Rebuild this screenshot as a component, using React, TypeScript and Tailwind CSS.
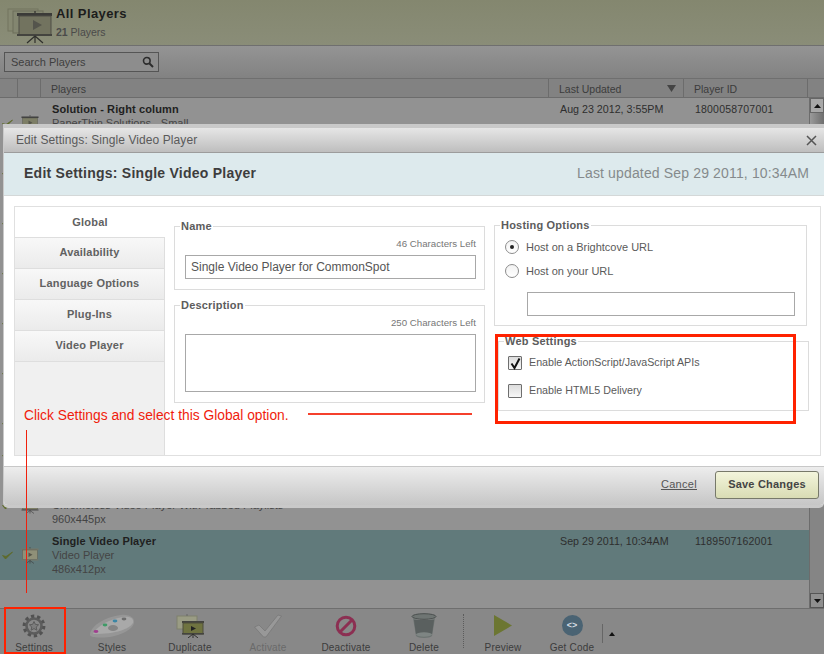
import type { ReactNode } from "react";

const FONT = "[font-family:'Liberation_Sans',Arial,sans-serif]";

function Check({ className = "" }: { className?: string }) {
  return (
    <svg width="11" height="9" viewBox="0 0 11 9" className={className}>
      <path d="M0.5 4.5 L3.5 8 L10.5 1 L4 5.5 Z" fill="#5e6b2a" stroke="#5e6b2a" strokeWidth="0.8" />
    </svg>
  );
}

function Screen({ size = 18, light = false }: { size?: number; light?: boolean }) {
  return (
    <svg width={size} height={size} viewBox="0 0 36 36">
      <rect x="1" y="5" width="34" height="3" fill={light ? "#77786a" : "#3d3d3d"} />
      <rect x="3" y="8" width="30" height="19" fill={light ? "#8f9078" : "#7d7e66"} stroke="#5a5a50" />
      <path d="M15 13 L23 17.5 L15 22 Z" fill="#55554a" />
      <rect x="1" y="27" width="34" height="2" fill={light ? "#77786a" : "#4a4a4a"} />
      <path d="M18 2 V5 M18 29 L10 35 M18 29 L26 35 M18 29 V35" stroke="#3a3a3a" strokeWidth="1.2" fill="none" />
    </svg>
  );
}

function BigPlayers() {
  return (
    <svg width="46" height="41" viewBox="0 0 46 41" className="shrink-0">
      <rect x="2" y="5" width="30" height="22" fill="#868972" stroke="#72745f" />
      <rect x="7" y="7" width="30" height="22" fill="#838670" stroke="#6c6e5a" />
      <rect x="11" y="9" width="36" height="3" fill="#3b3b38" />
      <rect x="13" y="12" width="32" height="19" fill="#72735f" stroke="#4e4e46" />
      <path d="M27 16 L36 21 L27 26 Z" fill="#54544c" />
      <rect x="11" y="30" width="36" height="2" fill="#44443f" />
      <path d="M29 32 L21 39 M29 32 L37 39 M29 32 V39 M29 7 V9" stroke="#2f2f2c" strokeWidth="1.2" />
    </svg>
  );
}

function GearIcon() {
  return (
    <svg width="24" height="24" viewBox="0 0 24 24">
      <circle cx="12" cy="12" r="9.6" fill="none" stroke="#525252" strokeWidth="3.6" strokeDasharray="3.2 2.8" />
      <circle cx="12" cy="12" r="7.5" fill="none" stroke="#5c5c5c" strokeWidth="2.6" />
      <path d="M12 7.5 L13.4 10.4 L16.6 10.8 L14.2 13 L14.9 16.2 L12 14.6 L9.1 16.2 L9.8 13 L7.4 10.8 L10.6 10.4 Z" fill="#7d7d7d" stroke="#5c5c5c" />
    </svg>
  );
}

function PaletteIcon() {
  return (
    <svg width="46" height="24" viewBox="0 0 46 24">
      <path d="M1 20 C3 11 16 3 32 1 C41 0 46 4 45 9 C44 15 33 21 21 23 C10 24 0 24 1 20 Z" fill="#969696" />
      <path d="M4 20 C8 12 20 5 34 3 C42 2 45 5 44 9 C40 15 28 20 4 20 Z" fill="#a9a9a9" />
      <ellipse cx="24" cy="14" rx="5" ry="3" fill="#858585" />
      <ellipse cx="7" cy="17.5" rx="2.4" ry="1.4" fill="#a03f8f" />
      <ellipse cx="16" cy="11" rx="2.4" ry="1.4" fill="#3f9a67" />
      <ellipse cx="26" cy="7" rx="2.4" ry="1.4" fill="#3b86a5" />
      <ellipse cx="35" cy="5" rx="2.4" ry="1.4" fill="#6d6d6d" />
    </svg>
  );
}

function DuplicateIcon() {
  return (
    <svg width="28" height="24" viewBox="0 0 28 24">
      <rect x="1" y="2" width="20" height="13" fill="#9a9c84" stroke="#7e806c" />
      <path d="M11 0 V2" stroke="#666" />
      <rect x="6" y="7" width="22" height="2" fill="#44443f" />
      <rect x="7" y="9" width="20" height="11" fill="#6f7340" stroke="#4e4e3c" />
      <path d="M15 12 L20 14.5 L15 17 Z" fill="#222" />
      <rect x="6" y="19" width="22" height="1.5" fill="#44443f" />
      <path d="M17 20 L12 24 M17 20 L22 24 M17 20 V24" stroke="#2f2f2c" />
    </svg>
  );
}

function ActivateIcon() {
  return (
    <svg width="28" height="24" viewBox="0 0 28 24">
      <path d="M0.5 13 L5 11 L11 17 L24 1 L27.5 2 L12 23 L9.5 23 Z" fill="#989898" stroke="#767676" strokeWidth="0.7" />
    </svg>
  );
}

function DeactivateIcon() {
  return (
    <svg width="22" height="22" viewBox="0 0 22 22">
      <circle cx="11" cy="11" r="8.8" fill="none" stroke="#8c2f52" strokeWidth="3" />
      <path d="M5 17 L17 5" stroke="#8c2f52" strokeWidth="3" />
    </svg>
  );
}

function TrashIcon() {
  return (
    <svg width="26" height="26" viewBox="0 0 26 26">
      <ellipse cx="13" cy="3.5" rx="12" ry="2.8" fill="#6f7573" stroke="#4a4f4e" />
      <path d="M2 5 L5 23 C7 25.5 19 25.5 21 23 L24 5 C20 8 6 8 2 5 Z" fill="#6c7371" />
      <path d="M3 7 L5 21 C9 19.5 17 19.5 21 21 L23 7" fill="#5a605f" />
      <ellipse cx="13" cy="21.5" rx="8" ry="2.2" fill="#7e8583" />
    </svg>
  );
}

function PreviewIcon() {
  return (
    <svg width="18" height="21" viewBox="0 0 18 21">
      <path d="M0 0 L18 10.5 L0 21 Z" fill="#6c7632" />
    </svg>
  );
}

function GetCodeIcon() {
  return (
    <div className="w-[21px] h-[21px] rounded-full bg-[#4a6373] flex items-center justify-center text-[9px] font-bold text-[#d5dde2]">
      {"<>"}
    </div>
  );
}

function ToolItem({ icon, label, width = "w-[78px]", dim = false }: { icon: ReactNode; label: string; width?: string; dim?: boolean }) {
  return (
    <div className={`${width} shrink-0 flex flex-col items-center`}>
      <div className="h-[27px] flex items-center justify-center">{icon}</div>
      <span className={`text-[10px] mt-[3px] tracking-[0.2px] leading-[12px] ${dim ? "text-[#6a6a6a]" : "text-[#3c3c3c]"}`}>{label}</span>
    </div>
  );
}

function PlayerRow({ name, type, size, date, id, selected = false }: { name: string; type: string; size: string; date: string; id: string; selected?: boolean }) {
  return (
    <div className={`h-[50px] flex ${selected ? "bg-[#617a7b]" : ""}`}>
      <div className="w-[20px] flex items-center pl-[2px]">
        <Check />
      </div>
      <div className="w-[20px] flex items-center justify-center">
        <Screen size={18} light={selected} />
      </div>
      <div className="flex-1 pt-[4px] pl-[12px] text-[11px] leading-[14px] text-[#444]">
        <div className="font-bold text-[#1f1f1f] tracking-[0.12px]">{name}</div>
        <div className="whitespace-nowrap">{type}</div>
        <div>{size}</div>
      </div>
      <div className="w-[135px] pt-[4px] text-[10.7px] leading-[14px] text-[#2e2e2e]">{date}</div>
      <div className="w-[114px] pt-[4px] text-[10.5px] leading-[14px] text-[#2e2e2e] tracking-[0.2px]">{id}</div>
    </div>
  );
}

function Tab({ label, active = false }: { label: string; active?: boolean }) {
  return (
    <div
      className={`h-[31px] flex items-center justify-center text-[11px] font-bold text-[#616161] tracking-[0.2px] border-b border-[#dedede] ${
        active ? "bg-white" : "pb-[2px] bg-gradient-to-b from-[#f8f8f8] to-[#ebebeb] border-r"
      }`}
    >
      {label}
    </div>
  );
}

function Legend({ children }: { children: ReactNode }) {
  return <legend className="ml-[5px] px-[1px] text-[11px] leading-[14px] font-bold text-[#5c5c5c] tracking-[0.2px]">{children}</legend>;
}

function Radio({ on = false, label }: { on?: boolean; label: string }) {
  return (
    <div className="flex items-center h-[14px]">
      <div className="w-[14px] h-[14px] rounded-full border border-[#8c8c8c] bg-gradient-to-b from-[#f2f2f2] to-white flex items-center justify-center">
        {on && <div className="w-[4px] h-[4px] rounded-full bg-[#222]" />}
      </div>
      <span className="ml-[7px] text-[11px] text-[#5a5a5a]">{label}</span>
    </div>
  );
}

function CheckBox({ on = false, label }: { on?: boolean; label: string }) {
  return (
    <div className="flex items-center h-[14px]">
      <div className="relative w-[14px] h-[14px] border border-[#6e6e6e] bg-gradient-to-b from-[#dcdcdc] to-[#f7f7f7] rounded-[1px]">
        {on && (
          <svg width="13" height="13" viewBox="0 0 13 13" className="absolute left-0 top-0">
            <path d="M2.5 6.5 L5.5 11 L10.5 1.5" fill="none" stroke="#111" strokeWidth="2" />
          </svg>
        )}
      </div>
      <span className="ml-[7px] mt-[-2px] text-[10.7px] text-[#5a5a5a]">{label}</span>
    </div>
  );
}

function EditDialog() {
  return (
    <div className="absolute left-[3px] right-0 top-[124px] h-[384px] pt-[4px] pb-[3px] pl-[1px] bg-[#c9c9c9] rounded-b-[5px]">
      <div className="h-full flex flex-col bg-white rounded-b-[4px] overflow-hidden">
        <div className="h-[25px] shrink-0 flex items-center justify-between pl-[12px] pr-[7px] bg-gradient-to-b from-[#e6e6e6] to-[#bebebe] border-b border-[#9c9c9c]">
          <span className="text-[12px] text-[#5a5a5a] tracking-[0.08px]">Edit Settings: Single Video Player</span>
          <svg width="11" height="11" viewBox="0 0 11 11">
            <path d="M1 1 L10 10 M10 1 L1 10" stroke="#555" strokeWidth="1.5" />
          </svg>
        </div>
        <div className="h-[43px] shrink-0 flex items-center justify-between pb-[2px] pl-[20px] pr-[15px] bg-[#ddeaed] border-b border-[#d4d8d8]">
          <span className="text-[14px] font-bold text-[#3d3d3d] tracking-[0.25px]">Edit Settings: Single Video Player</span>
          <span className="text-[14px] text-[#858a8c] tracking-[0.15px]">Last updated Sep 29 2011, 10:34AM</span>
        </div>
        <div className="flex-1 pt-[10px] pl-[10px] pr-[3px] pb-[10px] border-b border-[#c8c8c8]">
          <div className="h-full flex border border-[#e0e0e0]">
            <div className="w-[150px] shrink-0 flex flex-col">
              <Tab label="Global" active />
              <Tab label="Availability" />
              <Tab label="Language Options" />
              <Tab label="Plug-Ins" />
              <Tab label="Video Player" />
              <div className="flex-1 bg-[#f0f0f0] border-r border-[#dedede]" />
            </div>
            <div className="w-[329px] shrink-0 pl-[9px] pt-[12px]">
              <fieldset className="w-[311px] h-[71px] border border-[#dcdcdc]">
                <Legend>Name</Legend>
                <div className="pl-[10px] pr-[8px]">
                  <div className="text-right text-[9.7px] text-[#777] leading-[12px] mt-[5px]">46 Characters Left</div>
                  <input readOnly value="Single Video Player for CommonSpot" className="mt-[5px] w-full h-[24px] border border-[#a8a8a8] pl-[5px] text-[12px] text-[#555] outline-none" />
                </div>
              </fieldset>
              <fieldset className="mt-[8px] w-[311px] h-[105px] border border-[#dcdcdc]">
                <Legend>Description</Legend>
                <div className="pl-[10px] pr-[8px]">
                  <div className="text-right text-[9.7px] text-[#777] leading-[12px] mt-[5px]">250 Characters Left</div>
                  <div className="mt-[5px] h-[58px] border border-[#a8a8a8]" />
                </div>
              </fieldset>
            </div>
            <div className="flex-1 pt-[11px]">
              <fieldset className="w-[313px] h-[108px] border border-[#dcdcdc]">
                <Legend>Hosting Options</Legend>
                <div className="pl-[10px]">
                  <div className="mt-[8px]">
                    <Radio on label="Host on a Brightcove URL" />
                  </div>
                  <div className="mt-[10px]">
                    <Radio label="Host on your URL" />
                  </div>
                  <div className="mt-[14px] ml-[22px] w-[268px] h-[24px] border border-[#a8a8a8]" />
                </div>
              </fieldset>
              <fieldset className="ml-[4px] mt-[8px] w-[311px] h-[77px] border border-[#dcdcdc]">
                <Legend>Web Settings</Legend>
                <div className="pl-[9px]">
                  <div className="mt-[8px]">
                    <CheckBox on label="Enable ActionScript/JavaScript APIs" />
                  </div>
                  <div className="mt-[14px]">
                    <CheckBox label="Enable HTML5 Delivery" />
                  </div>
                </div>
              </fieldset>
            </div>
          </div>
        </div>
        <div className="h-[38px] shrink-0 flex items-start pt-[4px] justify-end pr-[5px] bg-gradient-to-b from-[#ededed] to-[#c6c6c6]">
          <span className="mt-[6px] text-[11px] leading-[14px] text-[#555] underline tracking-[0.3px] mr-[18px]">Cancel</span>
          <button className="w-[104px] h-[28px] pb-[2px] rounded-[3px] border border-[#77796a] bg-gradient-to-b from-[#f3f5dc] to-[#d9dcb4] text-[11px] font-bold text-[#444] tracking-[0.2px]">
            Save Changes
          </button>
        </div>
      </div>
    </div>
  );
}

export default function App() {
  const hiddenRows = [0, 1, 2, 3, 4, 5];

  return (
    <div className={`relative w-[824px] h-[654px] overflow-hidden flex flex-col bg-[#8e8e8e] ${FONT}`}>
      {/* Page behind the dialog */}
      <header className="h-[46px] shrink-0 flex bg-gradient-to-b from-[#84876f] to-[#8a8d78] border-b border-[#6f6f6f]">
        <div className="pl-[6px] pt-[4px]">
          <BigPlayers />
        </div>
        <div className="pl-[4px] pt-[6px]">
          <h1 className="text-[13px] leading-[16px] font-bold text-[#1c1c1c] tracking-[0.4px]">All Players</h1>
          <p className="mt-[4px] text-[10.5px] leading-[13px] text-[#4a4a4a]">
            <span className="font-bold">21</span> Players
          </p>
        </div>
      </header>

      <div className="h-[33px] shrink-0 flex items-center pl-[4px] bg-gradient-to-b from-[#949494] to-[#828282] border-b border-[#6f6f6f]">
        <div className="w-[155px] h-[20px] flex items-center justify-between pl-[6px] pr-[4px] bg-[#8d8d8d] border border-[#555]">
          <span className="text-[11px] text-[#3f3f3f]">Search Players</span>
          <svg width="12" height="12" viewBox="0 0 12 12">
            <circle cx="4.8" cy="4.8" r="3.3" fill="none" stroke="#2c2c2c" strokeWidth="1.6" />
            <path d="M7.5 7.5 L11 11" stroke="#2c2c2c" strokeWidth="2" />
          </svg>
        </div>
      </div>

      <div className="h-[19px] shrink-0 flex bg-[#828282] border-b border-[#6c6c6c] text-[10.5px] leading-[14px] text-[#3c3c3c]">
        <div className="w-[18px] h-full border-r border-[#6c6c6c]" />
        <div className="w-[23px] h-full border-r border-[#6c6c6c]" />
        <div className="w-[507px] pl-[10px] pt-[3px]">Players</div>
        <div className="relative w-[135px] h-full pl-[10px] pt-[3px] border-l border-[#6c6c6c]">
          Last Updated
          <svg width="9" height="7" viewBox="0 0 9 7" className="absolute right-[7px] top-[6px]">
            <path d="M0 0 H9 L4.5 7 Z" fill="#444" />
          </svg>
        </div>
        <div className="w-[125px] h-full pl-[10px] pt-[3px] border-l border-r border-[#6c6c6c]">Player ID</div>
      </div>

      <div className="flex-1 min-h-0 flex">
        <div className="flex-1 min-w-0 bg-[#929292]">
          <PlayerRow name="Solution - Right column" type="PaperThin Solutions - Small" size="" date="Aug 23 2012, 3:55PM" id="1800058707001" />
          {hiddenRows.map((r) => (
            <div key={r} className="h-[50px] flex items-center pl-[2px]">
              <Check />
            </div>
          ))}
          <div className="h-[14px] flex items-center pl-[2px]">
            <Check />
          </div>
          <div className="h-[18px]" />
          <PlayerRow name="Chromeless Video Player" type="Chromeless Video Player With Tabbed Playlists" size="960x445px" date="" id="" />
          <PlayerRow selected name="Single Video Player" type="Video Player" size="486x412px" date="Sep 29 2011, 10:34AM" id="1189507162001" />
        </div>
        <div className="w-[15px] shrink-0 flex flex-col bg-[#858585] border-l border-[#6c6c6c]">
          <div className="h-[15px] flex items-center justify-center bg-[#a8a8a8] border border-[#666]">
            <svg width="7" height="4" viewBox="0 0 7 4">
              <path d="M3.5 0 L7 4 H0 Z" fill="#111" />
            </svg>
          </div>
          <div className="h-[12px] bg-gradient-to-r from-[#9a9a9a] to-[#6e6e6e]" />
          <div className="flex-1" />
          <div className="h-[15px] flex items-center justify-center bg-[#8f8f8f] border border-[#555]">
            <svg width="7" height="4" viewBox="0 0 7 4">
              <path d="M0 0 H7 L3.5 4 Z" fill="#111" />
            </svg>
          </div>
        </div>
      </div>

      <footer className="h-[46px] shrink-0 flex items-start pt-[3px] bg-[#888888] border-t border-[#6e6e6e] ml-0">
        <div className="flex ml-[-5px]">
          <ToolItem icon={<GearIcon />} label="Settings" />
          <ToolItem icon={<PaletteIcon />} label="Styles" />
          <ToolItem icon={<DuplicateIcon />} label="Duplicate" />
          <ToolItem icon={<ActivateIcon />} label="Activate" dim />
          <ToolItem icon={<DeactivateIcon />} label="Deactivate" />
          <ToolItem icon={<TrashIcon />} label="Delete" />
        </div>
        <div className="w-0 h-[34px] mt-[2px] border-l border-dotted border-[#5c5c5c]" />
        <ToolItem icon={<PreviewIcon />} label="Preview" />
        <ToolItem icon={<GetCodeIcon />} label="Get Code" width="w-[60px]" />
        <div className="w-px h-[19px] mt-[12px] bg-[#666]" />
        <svg width="6" height="4" viewBox="0 0 6 4" className="ml-[6px] mt-[20px]">
          <path d="M3 0 L6 4 H0 Z" fill="#111" />
        </svg>
      </footer>

      <EditDialog />

      {/* Red annotations drawn on top of the screenshot */}
      <div className="absolute left-[24px] top-[408px] text-[13.8px] leading-[15px] text-[#f01c0c] whitespace-nowrap">
        Click Settings and select this Global option.
      </div>
      <div className="absolute left-[308px] top-[413px] w-[164px] h-[2px] bg-[#f5402c]" />
      <div className="absolute left-[26px] top-[430px] w-px h-[163px] bg-[#f0200c]" />
      <div className="absolute left-[495px] top-[334px] w-[301px] h-[90px] border-[3px] border-[#ff2200]" />
      <div className="absolute left-[4px] top-[607px] w-[62px] h-[47px] border-[2px] border-[#ff2200]" />
    </div>
  );
}
